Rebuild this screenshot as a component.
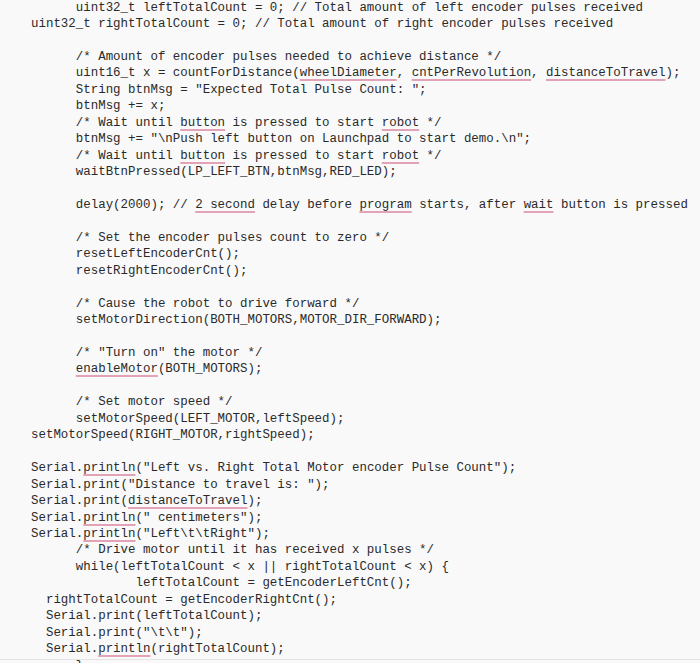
import React from 'react';

const lines: string[] = [
  '      uint32_t leftTotalCount = 0; // Total amount of left encoder pulses received',
  'uint32_t rightTotalCount = 0; // Total amount of right encoder pulses received',
  '',
  '      /* Amount of encoder pulses needed to achieve distance */',
  '      uint16_t x = countForDistance([wheelDiameter], [cntPerRevolution], [distanceToTravel]);',
  '      String btnMsg = "Expected Total Pulse Count: ";',
  '      btnMsg += x;',
  '      /* Wait until [button] is pressed to start [robot] */',
  '      btnMsg += "\\nPush left button on Launchpad to start demo.\\n";',
  '      /* Wait until [button] is pressed to start [robot] */',
  '      waitBtnPressed(LP_LEFT_BTN,btnMsg,RED_LED);',
  '',
  '      delay(2000); // [2 second] delay before [program] starts, after [wait] button is pressed',
  '',
  '      /* Set the encoder pulses count to zero */',
  '      resetLeftEncoderCnt();',
  '      resetRightEncoderCnt();',
  '',
  '      /* Cause the robot to drive forward */',
  '      setMotorDirection(BOTH_MOTORS,MOTOR_DIR_FORWARD);',
  '',
  '      /* "Turn on" the motor */',
  '      [enableMotor](BOTH_MOTORS);',
  '',
  '      /* Set motor speed */',
  '      setMotorSpeed(LEFT_MOTOR,leftSpeed);',
  'setMotorSpeed(RIGHT_MOTOR,rightSpeed);',
  '',
  'Serial.[println]("Left vs. Right Total Motor encoder Pulse Count");',
  'Serial.print("Distance to travel is: ");',
  'Serial.print([distanceToTravel]);',
  'Serial.[println](" centimeters");',
  'Serial.[println]("Left\\t\\tRight");',
  '      /* Drive motor until it has received x pulses */',
  '      while(leftTotalCount < x || rightTotalCount < x) {',
  '              leftTotalCount = getEncoderLeftCnt();',
  '  rightTotalCount = getEncoderRightCnt();',
  '  Serial.print(leftTotalCount);',
  '  Serial.print("\\t\\t");',
  '  Serial.[println](rightTotalCount);',
  '      }',
];

function CodeLine({ text }: { text: string }) {
  // [word] marks a spell-checker underline
  const parts = text.split(/\[([^\]]+)\]/);
  return (
    <div className="h-[16.46px]">
      {text === '' ? '\u00a0' : null}
      {parts.map((p, i) =>
        i % 2 === 1 ? (
          <span
            key={i}
            className="underline decoration-[#e3a3b6] decoration-2 underline-offset-[3px]"
          >
            {p}
          </span>
        ) : (
          <span key={i}>{p}</span>
        ),
      )}
    </div>
  );
}

export default function App() {
  return (
    <div className="relative w-[700px] h-[663px] overflow-hidden bg-[#f9f9f9]">
      <pre className="-mt-[0.5px] pl-[31px] whitespace-pre text-[12.45px] leading-[16.46px] text-[#2a2a2a] font-['Liberation_Mono',monospace]">
        {lines.map((l, i) => (
          <CodeLine key={i} text={l} />
        ))}
      </pre>
      <div className="absolute left-0 right-0 top-[659px] h-px bg-[#e4e4e4]" />
    </div>
  );
}
